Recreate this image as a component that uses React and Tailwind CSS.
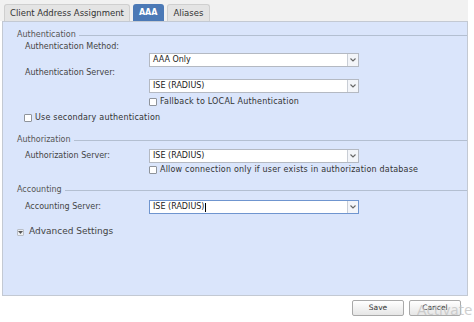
import React from 'react';

const FONT = { fontFamily: '"DejaVu Sans", Verdana, sans-serif' };

function Select({ value, focused }) {
  return (
    <div
      className={`flex w-[210px] h-[14px] bg-white border ${focused ? 'border-[#6f95cf]' : 'border-[#b4b9c2]'}`}
    >
      <div className="flex-1 flex items-center pl-[3px] text-[8px] text-[#222]">
        {value}
        {focused && <span className="ml-[1px] w-[1px] h-[9px] bg-black" />}
      </div>
      <div className="w-[11px] flex items-center justify-center border-l border-[#c9ced6] bg-[#f3f5f9]">
        <svg width="6" height="4" viewBox="0 0 6 4">
          <path d="M0.5 0.5 L3 3 L5.5 0.5" fill="none" stroke="#666" strokeWidth="1.1" />
        </svg>
      </div>
    </div>
  );
}

function Check({ label }) {
  return (
    <div className="flex items-center gap-[3px] h-[10px]">
      <span className="w-[8px] h-[8px] bg-white border border-[#8f949b] rounded-[1px]" />
      <span className="text-[8px] text-[#333] tracking-[0.2px]">{label}</span>
    </div>
  );
}

function Legend({ children }) {
  return (
    <div className="flex items-center h-[10px] pl-[14px]">
      <span className="text-[8px] text-[#555] pr-[3px]">{children}</span>
      <div className="flex-1 h-px bg-[#b3bfd1]" />
    </div>
  );
}

export default function App() {
  return (
    <div className="relative w-[474px] h-[322px] bg-white overflow-hidden" style={FONT}>
      <div className="w-[468px]">
        {/* tabs */}
        <div className="flex items-end gap-[3px] h-[21px] pl-[4px] bg-[#f1f1f1]">
          <div className="h-[17px] px-[5px] flex items-center bg-[#e4e4e4] border border-b-0 border-[#cfcfcf] rounded-t-[3px] text-[8.5px] text-[#333]">
            Client Address Assignment
          </div>
          <div className="h-[17px] px-[6px] flex items-center bg-[#4b79b6] rounded-t-[3px] text-[8px] font-bold text-white">
            AAA
          </div>
          <div className="h-[17px] px-[6px] flex items-center bg-[#e4e4e4] border border-b-0 border-[#cfcfcf] rounded-t-[3px] text-[8.5px] text-[#333]">
            Aliases
          </div>
        </div>

        {/* panel */}
        <div className="ml-[2px] h-[275px] bg-[#dae5fb] border border-[#c3c9d3] flex flex-col">
          <div className="mt-[8px]">
            <Legend>Authentication</Legend>
          </div>

          <div className="mt-[2px] pl-[22px] h-[26px] flex items-start">
            <span className="w-[124px] text-[8px] text-[#444] leading-[10px]">Authentication Method:</span>
            <div className="mt-[11px]">
              <Select value="AAA Only" />
            </div>
          </div>
          <div className="pl-[22px] h-[26px] flex items-start">
            <span className="w-[124px] text-[8px] text-[#444] leading-[10px]">Authentication Server:</span>
            <div className="mt-[11px]">
              <Select value="ISE (RADIUS)" />
            </div>
          </div>
          <div className="pl-[146px] mt-[3px]">
            <Check label="Fallback to LOCAL Authentication" />
          </div>
          <div className="pl-[21px] mt-[6px]">
            <Check label="Use secondary authentication" />
          </div>

          <div className="mt-[12px]">
            <Legend>Authorization</Legend>
          </div>
          <div className="mt-[4px] pl-[22px] flex items-center">
            <span className="w-[124px] text-[8px] text-[#444]">Authorization Server:</span>
            <Select value="ISE (RADIUS)" />
          </div>
          <div className="pl-[146px] mt-[2px]">
            <Check label="Allow connection only if user exists in authorization database" />
          </div>

          <div className="mt-[10px]">
            <Legend>Accounting</Legend>
          </div>
          <div className="mt-[5px] pl-[22px] flex items-center">
            <span className="w-[124px] text-[8px] text-[#444]">Accounting Server:</span>
            <Select value="ISE (RADIUS)" focused />
          </div>

          <div className="mt-[12px] pl-[14px] flex items-center gap-[5px] h-[12px]">
            <span className="w-[7px] h-[7px] bg-[#eef0f3] border border-[#b9bec6] rounded-[1px] flex items-center justify-center">
              <svg width="5" height="3" viewBox="0 0 5 3">
                <path d="M0 0 L5 0 L2.5 3 Z" fill="#555" />
              </svg>
            </span>
            <span className="text-[9px] text-[#444]">Advanced Settings</span>
          </div>
        </div>
      </div>

      {/* footer buttons */}
      <div className="flex justify-end gap-[5px] pr-[13px] mt-[4px]">
        <button className="w-[52px] h-[16px] bg-gradient-to-b from-white to-[#e6e6e6] border border-[#a9a9a9] rounded-[2px] text-[7.5px] text-[#333]">
          Save
        </button>
        <button className="w-[52px] h-[16px] bg-gradient-to-b from-white to-[#e6e6e6] border border-[#a9a9a9] rounded-[2px] text-[7.5px] text-[#333]">
          Cancel
        </button>
      </div>

      {/* OS watermark */}
      <div className="absolute left-[417px] top-[298px] text-[15px] text-[#c4c4c4] opacity-80 pointer-events-none" style={{ fontFamily: '"Open Sans", sans-serif' }}>
        Activate
      </div>
    </div>
  );
}
